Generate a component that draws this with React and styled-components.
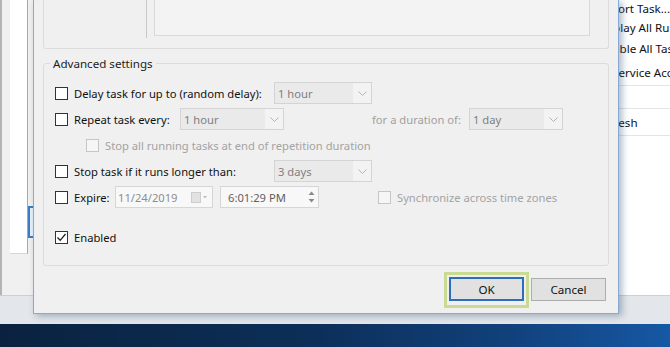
import React from 'react';
import styled, { createGlobalStyle } from 'styled-components';

const GlobalStyle = createGlobalStyle`
  html, body {
    margin: 0;
    padding: 0;
  }
  body {
    width: 670px;
    height: 347px;
    overflow: hidden;
    font-family: "Noto Sans", "Open Sans", sans-serif;
    font-size: 11.2px;
    color: #111;
  }
  * {
    box-sizing: border-box;
  }
`;

const Desktop = styled.div`
  width: 670px;
  height: 347px;
  display: flex;
  flex-direction: column;
  overflow: hidden;
`;

const Workspace = styled.div`
  position: relative;
  height: 324px;
  flex: none;
  background: linear-gradient(#eeeeee, #e3e6ea);
`;

/* the Task Scheduler window behind the dialog */
const BackWindow = styled.div`
  display: flex;
  height: 296px;
  border-bottom: 1px solid #cfcfcf;
  background: #f0f0f0;
`;

const NavPane = styled.div`
  width: 40px;
  flex: none;
  display: flex;
  align-items: flex-start;
  border-left: 2px solid #b4b4b4;
  padding-left: 8px;
`;

const NavList = styled.div`
  width: 18px;
  height: 254px;
  background: #fff;
  border-right: 1px solid #a8a8a8;
  border-bottom: 1px solid #d6d6d6;
`;

const NavButton = styled.div`
  margin-top: 206px;
  width: 12px;
  height: 32px;
  background: #e5f1fb;
  border: 2px solid #3d7cc4;
`;

const CenterPane = styled.div`
  flex: 1;
`;

const ActionsPane = styled.div`
  width: 110px;
  flex: none;
  background: #fff;
  display: flex;
  flex-direction: column;
  overflow: hidden;
`;

const ActionItem = styled.div`
  height: ${p => p.$h}px;
  flex: none;
  display: flex;
  align-items: center;
  padding-left: 36px;
  white-space: nowrap;
  overflow: hidden;
  color: #111;
  font-size: 11.6px;
  border-bottom: ${p => (p.$line ? '1px solid #e4e4e4' : 'none')};
`;

/* the Edit Trigger dialog */
const Dialog = styled.div`
  position: absolute;
  left: 33px;
  top: 0;
  width: 586px;
  height: 314px;
  background: #f0f0f0;
  border: 1px solid #86aad2;
  border-top: none;
  box-shadow: 3px 2px 7px rgba(50, 80, 120, 0.4);
  display: flex;
  flex-direction: column;
  padding: 0 9px 0 9px;
`;

const SettingsGroup = styled.div`
  height: 49px;
  flex: none;
  display: flex;
  align-items: flex-start;
  border: 1px solid #dcdcdc;
  border-top: none;
  border-radius: 0 0 3px 3px;
`;

const RadioColumn = styled.div`
  width: 103px;
  height: 38px;
  border-right: 1px solid #c8c8c8;
`;

const DetailBox = styled.div`
  margin-left: 7px;
  width: 436px;
  height: 36px;
  background: #f3f3f3;
  border: 1px solid #d9d9d9;
  border-top: none;
`;

const GroupBox = styled.div`
  margin-top: 14px;
  display: flex;
  flex-direction: column;
  border: 1px solid #dcdcdc;
  border-radius: 3px;
  padding: 0 0 15px 11px;
`;

const Legend = styled.div`
  align-self: flex-start;
  margin: -8px 0 8px -5px;
  padding: 0 3px;
  height: 16px;
  line-height: 16px;
  font-size: 11.6px;
  background: #f0f0f0;
  color: #1c1c1c;
`;

const Row = styled.div`
  display: flex;
  align-items: center;
  height: 26px;
  margin-top: ${p => p.$gap || 0}px;
`;

const CheckField = styled.div`
  display: flex;
  align-items: center;
  gap: 6px;
  flex: none;
  width: ${p => (p.$w ? `${p.$w}px` : 'auto')};
  margin-left: ${p => p.$indent || 0}px;
  color: ${p => (p.$disabled ? '#a3a3a3' : '#111')};
  white-space: nowrap;
`;

const Box = styled.span`
  width: 13px;
  height: 13px;
  flex: none;
  display: flex;
  align-items: center;
  justify-content: center;
  background: ${p => (p.$disabled ? '#f6f6f6' : '#fff')};
  border: 1px solid ${p => (p.$disabled ? '#c6c6c6' : '#333')};
`;

const DimLabel = styled.span`
  flex: none;
  width: ${p => p.$w}px;
  margin-left: ${p => p.$indent}px;
  color: #a0a0a0;
  white-space: nowrap;
`;

const Combo = styled.div`
  flex: none;
  width: ${p => p.$w}px;
  height: 22px;
  display: flex;
  border: 1px solid #d4d4d4;
  color: #808080;
`;

const ComboText = styled.span`
  flex: 1;
  display: flex;
  align-items: center;
  padding-left: 3px;
  background: #eaeaea;
`;

const ComboArrow = styled.span`
  width: 18px;
  display: flex;
  align-items: center;
  justify-content: center;
  background: #f3f3f3;
`;

const PickerBox = styled.div`
  flex: none;
  width: ${p => p.$w}px;
  margin-left: ${p => p.$indent || 0}px;
  height: 22px;
  display: flex;
  align-items: center;
  padding-left: ${p => p.$pad}px;
  background: #f8f8f8;
  border: 1px solid #d6d6d6;
  color: ${p => p.$tone};
`;

const PickerText = styled.span`
  flex: 1;
`;

const PickerTail = styled.span`
  width: ${p => p.$w}px;
  height: 100%;
  display: flex;
  align-items: center;
  justify-content: center;
`;

const ButtonBar = styled.div`
  margin-top: 6px;
  display: flex;
  justify-content: flex-end;
  align-items: flex-start;
  padding-right: 3px;
`;

const Highlight = styled.div`
  border: 3px solid #c9da93;
  padding: 2px 2px 4px 2px;
`;

const Button = styled.div`
  width: 75px;
  height: ${p => (p.$primary ? 24 : 23)}px;
  margin-top: ${p => (p.$primary ? 0 : 6)}px;
  margin-left: ${p => (p.$primary ? 0 : 2)}px;
  display: flex;
  align-items: center;
  justify-content: center;
  font-size: 11.6px;
  background: #e1e1e1;
  border: ${p => (p.$primary ? '2px solid #2f6fba' : '1px solid #adadad')};
  color: #111;
`;

const Taskbar = styled.div`
  flex: 1;
  background: linear-gradient(90deg, #0a223f 0%, #0c2e57 45%, #11407a 75%, #1658a4 100%);
`;

const Chevron = () => (
  <svg width="9" height="5" viewBox="0 0 9 5">
    <path d="M0.5 0.5 L4.5 4.5 L8.5 0.5" fill="none" stroke="#b3b3b3" strokeWidth="1" />
  </svg>
);

const Tick = () => (
  <svg width="11" height="11" viewBox="0 0 11 11">
    <path d="M1.5 5.5 L4.2 8.3 L9.5 2" fill="none" stroke="#222" strokeWidth="1.3" />
  </svg>
);

const CalendarDrop = () => (
  <svg width="20" height="13" viewBox="0 0 20 13">
    <rect x="1.5" y="1.5" width="9" height="10" fill="#e2e2e2" stroke="#cdcdcd" />
    <path d="M13 5 L17 5 L15 7.5 Z" fill="#bdbdbd" />
  </svg>
);

const Spinner = () => (
  <svg width="9" height="16" viewBox="0 0 9 16">
    <path d="M1.5 6 L4.5 2.5 L7.5 6 Z" fill="#8a8a8a" />
    <path d="M1.5 10 L4.5 13.5 L7.5 10 Z" fill="#8a8a8a" />
  </svg>
);

const Check = ({ checked, disabled, w, indent, children }) => (
  <CheckField $w={w} $indent={indent} $disabled={disabled}>
    <Box $disabled={disabled}>{checked && <Tick />}</Box>
    {children}
  </CheckField>
);

const Select = ({ w, value }) => (
  <Combo $w={w}>
    <ComboText>{value}</ComboText>
    <ComboArrow><Chevron /></ComboArrow>
  </Combo>
);

const actions = [
  { label: 'Import Task...', h: 17 },
  { label: 'Display All Running Tasks', h: 20 },
  { label: 'Disable All Tasks History', h: 22 },
  { label: 'AT Service Account Configuration', h: 27, line: true },
  { label: '', h: 23, line: true },
  { label: 'Refresh', h: 27, line: true },
];

export default function App() {
  return (
    <>
      <GlobalStyle />
      <Desktop>
        <Workspace>
          <BackWindow>
            <NavPane>
              <NavList />
              <NavButton />
            </NavPane>
            <CenterPane />
            <ActionsPane>
              {actions.map((a, i) => (
                <ActionItem key={i} $h={a.h} $line={a.line}>{a.label}</ActionItem>
              ))}
            </ActionsPane>
          </BackWindow>

          <Dialog>
            <SettingsGroup>
              <RadioColumn />
              <DetailBox />
            </SettingsGroup>

            <GroupBox>
              <Legend>Advanced settings</Legend>
              <Row>
                <Check w={219}>Delay task for up to (random delay):</Check>
                <Select w={98} value="1 hour" />
              </Row>
              <Row>
                <Check w={125}>Repeat task every:</Check>
                <Select w={104} value="1 hour" />
                <DimLabel $w={97} $indent={88}>for a duration of:</DimLabel>
                <Select w={94} value="1 day" />
              </Row>
              <Row>
                <Check indent={31} disabled>Stop all running tasks at end of repetition duration</Check>
              </Row>
              <Row>
                <Check w={219}>Stop task if it runs longer than:</Check>
                <Select w={98} value="3 days" />
              </Row>
              <Row>
                <Check w={60}>Expire:</Check>
                <PickerBox $w={98} $pad={2} $tone="#8d8d8d">
                  <PickerText>11/24/2019</PickerText>
                  <PickerTail $w={24}><CalendarDrop /></PickerTail>
                </PickerBox>
                <PickerBox $w={99} $indent={7} $pad={7} $tone="#5f5f5f">
                  <PickerText>6:01:29 PM</PickerText>
                  <PickerTail $w={14}><Spinner /></PickerTail>
                </PickerBox>
                <Check indent={59} disabled>Synchronize across time zones</Check>
              </Row>
              <Row $gap={14}>
                <Check checked>Enabled</Check>
              </Row>
            </GroupBox>

            <ButtonBar>
              <Highlight>
                <Button $primary>OK</Button>
              </Highlight>
              <Button>Cancel</Button>
            </ButtonBar>
          </Dialog>
        </Workspace>
        <Taskbar />
      </Desktop>
    </>
  );
}
